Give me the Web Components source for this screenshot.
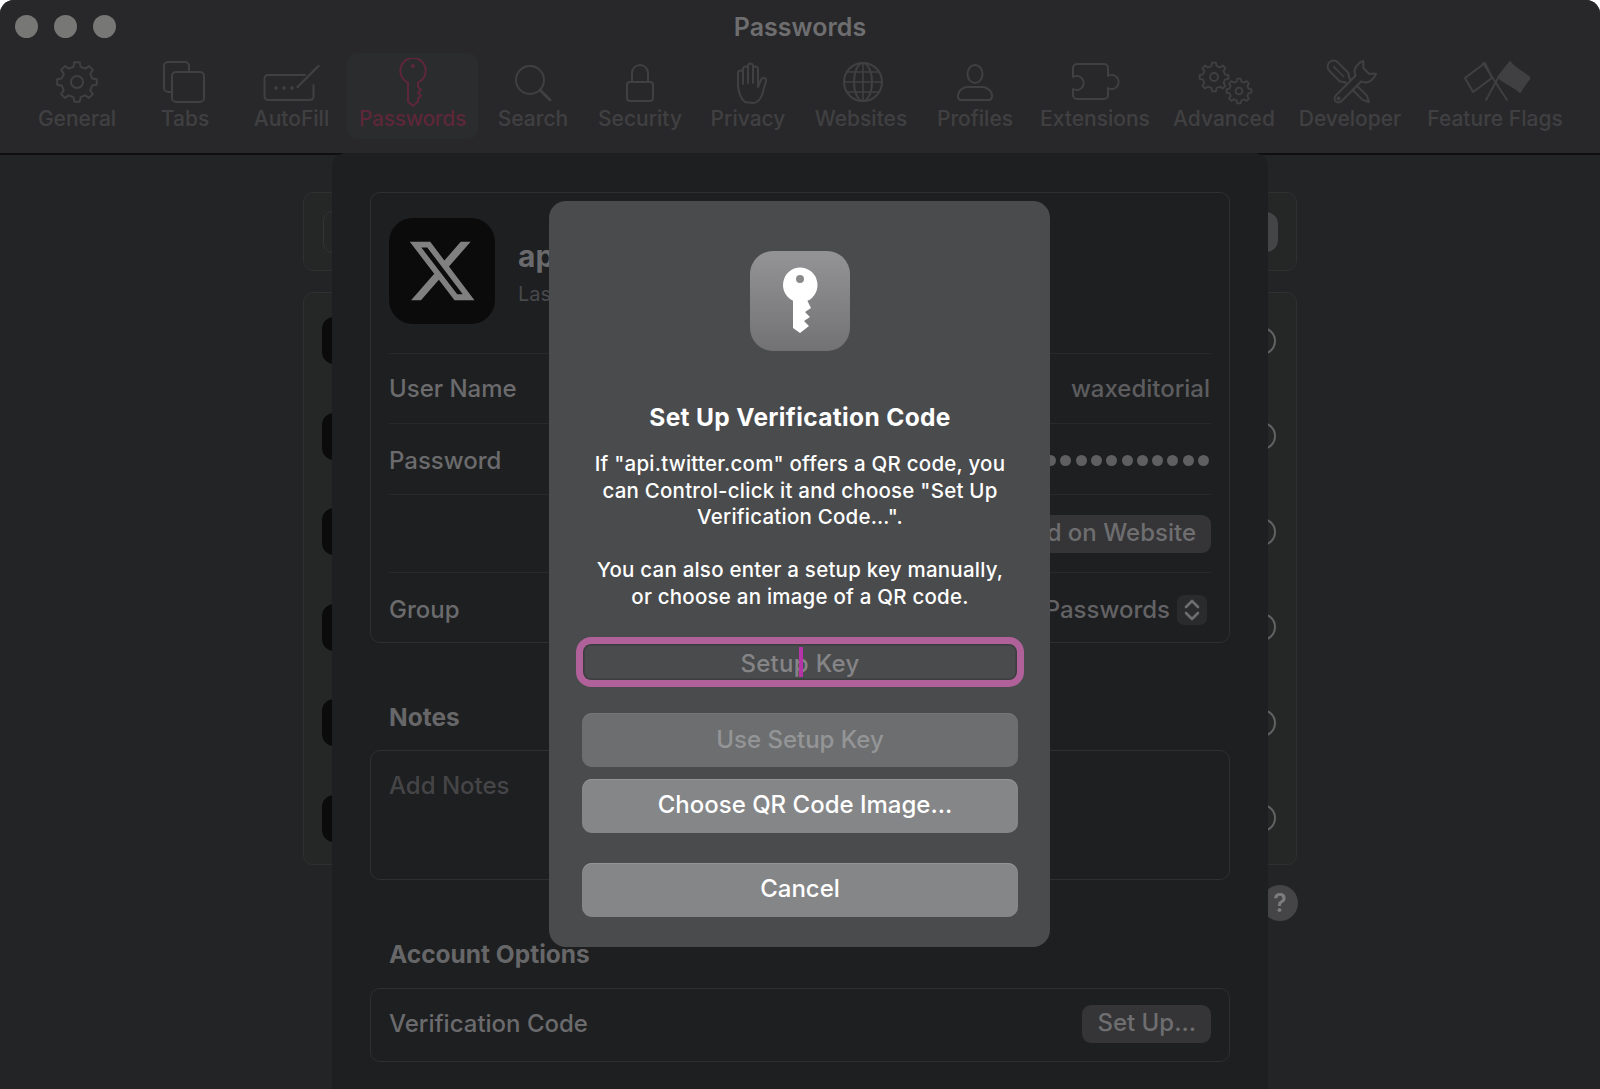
<!DOCTYPE html>
<html lang="en">
<head>
<meta charset="utf-8">
<title>Passwords</title>
<style>
    html, body { margin: 0; height: 100%; background: #fff; overflow: hidden; }
    body { font-family: Inter, "Liberation Sans", sans-serif; }
</style>
</head>
<body>
<pref-window>
    <tool-bar slot="bar" title="Passwords">
        <tool-item w="114" icon="general">General</tool-item>
        <tool-item w="102" icon="tabs">Tabs</tool-item>
        <tool-item w="111" icon="autofill">AutoFill</tool-item>
        <tool-item w="131" icon="passwords" active>Passwords</tool-item>
        <tool-item w="110" icon="search">Search</tool-item>
        <tool-item w="104" icon="security">Security</tool-item>
        <tool-item w="112" icon="privacy">Privacy</tool-item>
        <tool-item w="114" icon="websites">Websites</tool-item>
        <tool-item w="114" icon="profiles">Profiles</tool-item>
        <tool-item w="126" icon="extensions">Extensions</tool-item>
        <tool-item w="132" icon="advanced">Advanced</tool-item>
        <tool-item w="120" icon="developer">Developer</tool-item>
        <tool-item w="170" icon="flags">Feature Flags</tool-item>
    </tool-bar>

    <back-pane slot="pane"></back-pane>

    <account-sheet slot="sheet">
        <group-box>
            <account-head name="api.twitter.com" sub="Last modified"></account-head>
            <info-row h="70" shift="0.5" label="User Name"><span style="color:#5d5d5f;margin-right:1px">waxeditorial</span></info-row>
            <info-row h="71" shift="1.5" label="Password"><password-dots></password-dots></info-row>
            <info-row h="78" shift="0"><soft-button>Password on Website</soft-button></info-row>
            <info-row h="70" shift="2" label="Group"><span style="color:#636365">Passwords</span><group-stepper></group-stepper></info-row>
        </group-box>
        <section-title top="59" bottom="18">Notes</section-title>
        <notes-box>Add Notes</notes-box>
        <section-title top="59" bottom="19">Account Options</section-title>
        <group-box>
            <info-row h="72" shift="-1.5" label="Verification Code" plain><soft-button>Set Up...</soft-button></info-row>
        </group-box>
    </account-sheet>

    <setup-dialog slot="dialog" title="Set Up Verification Code">
        <p>If "api.twitter.com" offers a QR code, you<br>can Control-click it and choose "Set Up<br>Verification Code…".</p>
        <p>You can also enter a setup key manually,<br>or choose an image of a QR code.</p>
    </setup-dialog>
</pref-window>

<script>
/**
 * Contour d'un engrenage, utilisé par les icônes General et Advanced
 */
function gear(cx, cy, r, teeth) {
    const inner = r * 0.78;
    const step = Math.PI * 2 / teeth;
    const points = [];
    for (let i = 0; i < teeth; i++) {
        const a = i * step;
        [[-0.3, inner], [-0.17, r], [0.17, r], [0.3, inner]].forEach(([k, rad]) => {
            const angle = a + k * step;
            points.push((cx + rad * Math.sin(angle)).toFixed(1) + ' ' + (cy - rad * Math.cos(angle)).toFixed(1));
        });
    }
    return 'M' + points.join('L') + 'Z';
}

// Chaque icône a son origine au centre de l'item, viewBox -35 -25 70 50
const ICONS = {
    general: `<path d="${gear(0, -1, 20, 8)}"/><circle cx="0" cy="-1" r="6"/>`,
    tabs: `<rect x="-21" y="-21" width="25" height="30" rx="4"/><rect x="-13" y="-11" width="32" height="30" rx="4" fill="#28282a"/>`,
    autofill: `<path d="M13 -8H-24a3.5 3.5 0 0 0 -3.5 3.5V13.5a3.5 3.5 0 0 0 3.5 3.5H18a3.5 3.5 0 0 0 3.5 -3.5V2"/><path d="M5.5 4L26.5 -17" stroke-width="2.4"/>
        <circle cx="-16" cy="5" r="1.8" fill="currentColor" stroke="none"/><circle cx="-8" cy="5" r="1.8" fill="currentColor" stroke="none"/><circle cx="0" cy="5" r="1.8" fill="currentColor" stroke="none"/>`,
    passwords: `<path d="M0 -25a12.7 12.7 0 0 1 12.7 12.7c0 6 -4 10 -7.7 12v4l3 3 -3 3 3 3 -3 3 0 3 -5 4 -5 -4v-19c-3.7 -2 -7.7 -6 -7.7 -12a12.7 12.7 0 0 1 12.7 -12.7Z"/><circle cx="0" cy="-17" r="2" fill="currentColor" stroke="none"/>`,
    search: `<circle cx="-3" cy="-3" r="14"/><path d="M7 7L17 17" stroke-width="2.8"/>`,
    security: `<rect x="-13" y="-1" width="26" height="19" rx="3"/><path d="M-8 -1V-10a8 8 0 0 1 16 0V-1"/>`,
    privacy: `<path d="M-3 19C-7 16 -9 10 -10 4V-10a2.5 2.5 0 0 1 5 0V-14a2.5 2.5 0 0 1 5 0V-17a2.5 2.5 0 0 1 5 0V-14a2.5 2.5 0 0 1 5 0V4L13 -3a2.5 2.5 0 0 1 5 1L14 12C12 17 9 20 5 20Z"/><path d="M-5 -10V1M0 -14V0M5 -14V0"/>`,
    websites: `<circle cx="2" cy="-1" r="19"/><ellipse cx="2" cy="-1" rx="9" ry="19"/><path d="M2 -20V18M-17 -1H21M-14 -11H18M-14 9H18" stroke-width="1.6"/>`,
    profiles: `<ellipse cx="0" cy="-9" rx="7.5" ry="9"/><path d="M-17 13C-17 7 -11 4 -7 4H7C11 4 17 7 17 13C17 15 16 17 14 17H-14C-16 17 -17 15 -17 13Z"/>`,
    extensions: `<path d="M-18 -19H9a4 4 0 0 1 4 4V-7A7 7 0 1 1 13 5V12a4 4 0 0 1 -4 4H-18a4 4 0 0 1 -4 -4V6A7 7 0 1 0 -22 -6V-15a4 4 0 0 1 4 -4Z"/>`,
    advanced: `<g stroke-width="1.8"><path d="${gear(-10, -6, 14.5, 8)}"/><circle cx="-10" cy="-6" r="4"/><path d="${gear(15, 8, 12.5, 8)}"/><circle cx="15" cy="8" r="3.4"/></g>`,
    developer: `<g transform="rotate(-45 2 2)"><path d="M-4 -24a6 6 0 0 1 12 0V-9L5 -5V20L2 26L-1 20V-5L-4 -9Z" fill="#28282a"/><path d="M2 -24V-10" stroke-width="1.5"/></g>
        <g transform="rotate(45 2 2)"><path d="M-2 -7C-8 -9 -10 -16 -7 -23L-2 -18H6L11 -23C14 -16 12 -9 6 -7V21a4 4 0 0 1 -8 0Z" fill="#28282a"/><circle cx="2" cy="21" r="1"/></g>`,
    flags: `<path d="M-30 -5L-10 -20L-3 -5L-22 9Z"/><path d="M-12 -20L12 17M3 -5L-9 17" stroke-width="1.8"/><path d="M3 -6C7 -11 11 -16 15 -21C20 -14 28 -11 35 -5C31 -1 28 4 25 9C18 3 10 0 3 -6Z" fill="currentColor"/>`
};

class PrefWindow extends HTMLElement {
    constructor() {
        super();
        const root = this.attachShadow({mode: 'open'});
        root.innerHTML = `
            <style>
                :host {
                    display: flex;
                    flex-direction: column;
                    position: relative;
                    height: 1089px;
                    overflow: hidden;
                    border-radius: 14px 14px 0 0;
                    background: #222426;
                    filter: blur(.35px);
                }
            </style>
            <slot name="bar"></slot>
            <slot name="pane"></slot>
            <slot name="sheet"></slot>
            <slot name="dialog"></slot>`;
    }
}

class ToolBar extends HTMLElement {
    constructor() {
        super();
        const title = this.getAttribute('title') || '';
        this.removeAttribute('title');
        const root = this.attachShadow({mode: 'open'});
        root.innerHTML = `
            <style>
                :host {
                    display: block;
                    height: 153px;
                    background: #28282a;
                    border-top: 2px solid #3a3a3c;
                    border-bottom: 2px solid #0f0f10;
                    box-sizing: content-box;
                    margin-top: -2px;
                    position: relative;
                }
                .head {
                    display: grid;
                    grid-template-columns: 1fr auto 1fr;
                    align-items: center;
                    height: 53px;
                    padding: 0 15px;
                }
                .lights { display: flex; gap: 16px; }
                .lights i { width: 23px; height: 23px; border-radius: 50%; background: #777775; }
                .title { font: 600 25px/30px Inter, sans-serif; color: #6e6e70; }
                .tools { display: flex; padding: 0 20px; }
            </style>
            <div class="head">
                <div class="lights"><i></i><i></i><i></i></div>
                <div class="title">${title}</div>
                <div></div>
            </div>
            <div class="tools"><slot></slot></div>`;
    }
}

class ToolItem extends HTMLElement {
    constructor() {
        super();
        const root = this.attachShadow({mode: 'open'});
        root.innerHTML = `
            <style>
                :host {
                    display: flex;
                    flex-direction: column;
                    align-items: center;
                    flex: none;
                    box-sizing: border-box;
                    width: ${this.getAttribute('w')}px;
                    height: 86px;
                    padding-top: 5px;
                    border-radius: 10px;
                    color: #404042;
                }
                :host([active]) {
                    background: #2b2c2e;
                    color: #5e2739;
                    letter-spacing: -.3px;
                }
                svg { display: block; fill: none; stroke: currentColor; stroke-width: 2; stroke-linejoin: round; stroke-linecap: round; }
                .label { font: 500 21px/22px Inter, sans-serif; white-space: nowrap; }
            </style>
            <svg width="70" height="50" viewBox="-35 -25 70 50">${ICONS[this.getAttribute('icon')]}</svg>
            <div class="label"><slot></slot></div>`;
    }
}

/**
 * La fenêtre de réglages sous la feuille : on n'en voit que les bords
 */
class BackPane extends HTMLElement {
    constructor() {
        super();
        const root = this.attachShadow({mode: 'open'});
        const rows = [0, 1, 2, 3, 4, 5].map(() => `<div class="row"><i class="thumb"></i><i class="arrow"></i></div>`).join('');
        root.innerHTML = `
            <style>
                :host { display: block; padding: 37px 303px 0; }
                .box { background: #252726; border: 1px solid #2f3032; border-radius: 10px; box-sizing: border-box; }
                .top { height: 79px; display: flex; align-items: center; justify-content: space-between; padding: 0 18px 0 19px; margin-bottom: 21px; }
                .field { width: 70px; height: 40px; border: 1px solid #333436; border-radius: 10px; }
                .pill { width: 70px; height: 40px; border-radius: 12px; background: #444547; }
                .list { height: 573px; }
                .row { height: 95.5px; display: flex; align-items: center; justify-content: space-between; padding: 0 20px 0 18px; }
                .thumb { width: 60px; height: 47px; border-radius: 12px; background: #0b0b0b; }
                .arrow { width: 24px; height: 24px; border-radius: 50%; border: 2px solid #626264; }
                .help { margin: 20px -1px 0 auto; width: 36px; height: 36px; border-radius: 50%; background: #454547; color: #7c7c7e;
                    font: 600 25px/36px Inter, sans-serif; text-align: center; }
            </style>
            <div class="box top"><i class="field"></i><i class="pill"></i></div>
            <div class="box list">${rows}</div>
            <div class="help">?</div>`;
    }
}

class AccountSheet extends HTMLElement {
    constructor() {
        super();
        const root = this.attachShadow({mode: 'open'});
        root.innerHTML = `
            <style>
                :host {
                    display: block;
                    position: absolute;
                    left: 332px;
                    top: 153px;
                    width: 936px;
                    bottom: 0;
                    box-sizing: border-box;
                    padding: 39px 38px 0;
                    background: #1e1f21;
                    border-radius: 14px 14px 0 0;
                }
            </style>
            <slot></slot>`;
    }
}

class GroupBox extends HTMLElement {
    constructor() {
        super();
        const root = this.attachShadow({mode: 'open'});
        root.innerHTML = `
            <style>
                :host { display: block; border: 1px solid #2e2f31; border-radius: 10px; padding: 0 18px; }
            </style>
            <slot></slot>`;
    }
}

class AccountHead extends HTMLElement {
    constructor() {
        super();
        const name = this.getAttribute('name');
        const sub = this.getAttribute('sub');
        const root = this.attachShadow({mode: 'open'});
        root.innerHTML = `
            <style>
                :host { display: flex; gap: 23px; height: 160px; padding-top: 25px; box-sizing: border-box; }
                .logo { width: 106px; height: 106px; border-radius: 24px; background: #0b0b0b; display: flex; align-items: center; justify-content: center; }
                .name { font: 700 30px/36px Inter, sans-serif; color: #6a6a6c; margin-top: 20px; }
                .sub { font: 400 20px/26px Inter, sans-serif; color: #49494b; margin-top: 7px; }
            </style>
            <div class="logo">
                <svg width="72" height="72" viewBox="0 0 24 24"><path fill="#808080" d="M18.244 2.25h3.308l-7.227 8.26 8.502 11.24H16.17l-5.214-6.817L4.99 21.75H1.68l7.73-8.835L1.254 2.25H8.08l4.713 6.231zm-1.161 17.52h1.833L7.084 4.126H5.117z"/></svg>
            </div>
            <div><div class="name">${name}</div><div class="sub">${sub}</div></div>`;
    }
}

class InfoRow extends HTMLElement {
    constructor() {
        super();
        const label = this.getAttribute('label') || '';
        const h = this.getAttribute('h');
        const shift = Number(this.getAttribute('shift') || 0);
        const root = this.attachShadow({mode: 'open'});
        root.innerHTML = `
            <style>
                :host {
                    display: flex;
                    align-items: center;
                    justify-content: space-between;
                    box-sizing: border-box;
                    height: ${h}px;
                    padding-top: ${Math.max(shift, 0) * 2}px;
                    padding-bottom: ${Math.max(-shift, 0) * 2}px;
                    border-top: 1px solid #28292b;
                    font: 500 24px/30px Inter, sans-serif;
                    color: #6b6b6d;
                }
                :host([plain]) { border-top: 0; }
                .value { display: flex; align-items: center; gap: 7px; margin-left: auto; }
            </style>
            <div>${label}</div>
            <div class="value"><slot></slot></div>`;
    }
}

class PasswordDots extends HTMLElement {
    constructor() {
        super();
        const root = this.attachShadow({mode: 'open'});
        root.innerHTML = `
            <style>
                :host { display: flex; gap: 4.3px; margin-right: 2px; }
                i { width: 11px; height: 11px; border-radius: 50%; background: #5f5f61; }
            </style>
            ${'<i></i>'.repeat(14)}`;
    }
}

class SoftButton extends HTMLElement {
    constructor() {
        super();
        const root = this.attachShadow({mode: 'open'});
        root.innerHTML = `
            <style>
                :host {
                    display: block;
                    height: 38px;
                    padding: 0 15px;
                    border-radius: 9px;
                    background: #353537;
                    color: #6e6e70;
                    font: 500 24px/36px Inter, sans-serif;
                    white-space: nowrap;
                }
            </style>
            <slot></slot>`;
    }
}

class GroupStepper extends HTMLElement {
    constructor() {
        super();
        const root = this.attachShadow({mode: 'open'});
        root.innerHTML = `
            <style>
                :host { display: block; width: 30px; height: 30px; border-radius: 7px; background: #2a2b2c; margin-right: 4px; }
                svg { display: block; fill: none; stroke: #6e6e6e; stroke-width: 2.6; stroke-linecap: round; stroke-linejoin: round; }
            </style>
            <svg width="30" height="30" viewBox="0 0 30 30"><path d="M9 12L15 6L21 12M9 18L15 24L21 18"/></svg>`;
    }
}

class SectionTitle extends HTMLElement {
    constructor() {
        super();
        const root = this.attachShadow({mode: 'open'});
        root.innerHTML = `
            <style>
                :host {
                    display: block;
                    margin: ${this.getAttribute('top')}px 0 ${this.getAttribute('bottom')}px 19px;
                    font: 700 24.5px/30px Inter, sans-serif;
                    color: #676769;
                }
            </style>
            <slot></slot>`;
    }
}

class NotesBox extends HTMLElement {
    constructor() {
        super();
        const root = this.attachShadow({mode: 'open'});
        root.innerHTML = `
            <style>
                :host {
                    display: block;
                    box-sizing: border-box;
                    height: 130px;
                    padding: 20px 18px;
                    border: 1px solid #2e2f31;
                    border-radius: 10px;
                    font: 500 24px/30px Inter, sans-serif;
                    color: #454547;
                }
            </style>
            <slot></slot>`;
    }
}

class DialogButton extends HTMLElement {
    constructor() {
        super();
        const root = this.attachShadow({mode: 'open'});
        root.innerHTML = `
            <style>
                :host {
                    display: block;
                    height: 54px;
                    border-radius: 10px;
                    background: #858688;
                    box-shadow: inset 0 1px 0 #949597;
                    color: #fff;
                    font: 500 24px/52px Inter, sans-serif;
                    text-align: center;
                }
                :host([disabled]) { background: #6d6e70; box-shadow: inset 0 1px 0 #757678; color: #949597; line-height: 54px; }
            </style>
            <slot></slot>`;
    }
}

class SetupDialog extends HTMLElement {
    constructor() {
        super();
        const title = this.getAttribute('title');
        this.removeAttribute('title');
        const root = this.attachShadow({mode: 'open'});
        root.innerHTML = `
            <style>
                :host {
                    display: flex;
                    flex-direction: column;
                    position: absolute;
                    left: 549px;
                    top: 201px;
                    width: 501px;
                    height: 746px;
                    box-sizing: border-box;
                    padding: 50px 32px 0 33px;
                    border-radius: 17px;
                    background: #4a4b4d;
                    color: #fff;
                    text-align: center;
                }
                .icon {
                    width: 100px;
                    height: 100px;
                    margin: 0 auto 51px;
                    border-radius: 23px;
                    background: linear-gradient(#949496, #727274);
                }
                .icon svg { display: block; }
                h2 { margin: 0 0 19px; font: 700 24.5px/30px Inter, sans-serif; letter-spacing: .35px; }
                .body { font: 500 20.5px/26.6px Inter, sans-serif; letter-spacing: .22px; margin: 0 -10px; }
                ::slotted(p) { margin: 0 0 26.6px; }
                .field {
                    position: relative;
                    box-sizing: border-box;
                    height: 50px;
                    margin: 0 -6px 26px;
                    margin-top: -0.6px;
                    border: 7px solid #b0619a;
                    border-radius: 15px;
                    box-shadow: inset 0 0 0 1.5px #3c3d3f;
                    color: #858587;
                    font: 500 24px/39px Inter, sans-serif;
                    letter-spacing: .3px;
                }
                .caret { position: absolute; left: 216px; top: 3px; width: 4px; height: 30px; background: #b535a8; }
                .stack { display: flex; flex-direction: column; gap: 12px; margin-bottom: 30px; }
                .shifted { padding-left: 10px; }
            </style>
            <div class="icon">
                <svg width="100" height="100" viewBox="0 0 100 100">
                    <path fill="#fff" fill-rule="evenodd" d="M50 16.5a17.5 17.5 0 0 1 7.5 33.3V50L61 57l-6 4 5 5 -6 4 5 5 -9 7 -7 -5V49.8A17.5 17.5 0 0 1 50 16.5ZM50 24a4 4 0 1 0 0 8a4 4 0 0 0 0 -8Z"/>
                </svg>
            </div>
            <h2>${title}</h2>
            <div class="body"><slot></slot></div>
            <div class="field">Setup Key<i class="caret"></i></div>
            <div class="stack">
                <dialog-button disabled>Use Setup Key</dialog-button>
                <dialog-button class="shifted">Choose QR Code Image...</dialog-button>
            </div>
            <dialog-button>Cancel</dialog-button>`;
    }
}

customElements.define('pref-window', PrefWindow);
customElements.define('tool-bar', ToolBar);
customElements.define('tool-item', ToolItem);
customElements.define('back-pane', BackPane);
customElements.define('account-sheet', AccountSheet);
customElements.define('group-box', GroupBox);
customElements.define('account-head', AccountHead);
customElements.define('info-row', InfoRow);
customElements.define('password-dots', PasswordDots);
customElements.define('soft-button', SoftButton);
customElements.define('group-stepper', GroupStepper);
customElements.define('section-title', SectionTitle);
customElements.define('notes-box', NotesBox);
customElements.define('dialog-button', DialogButton);
customElements.define('setup-dialog', SetupDialog);
</script>
</body>
</html>
